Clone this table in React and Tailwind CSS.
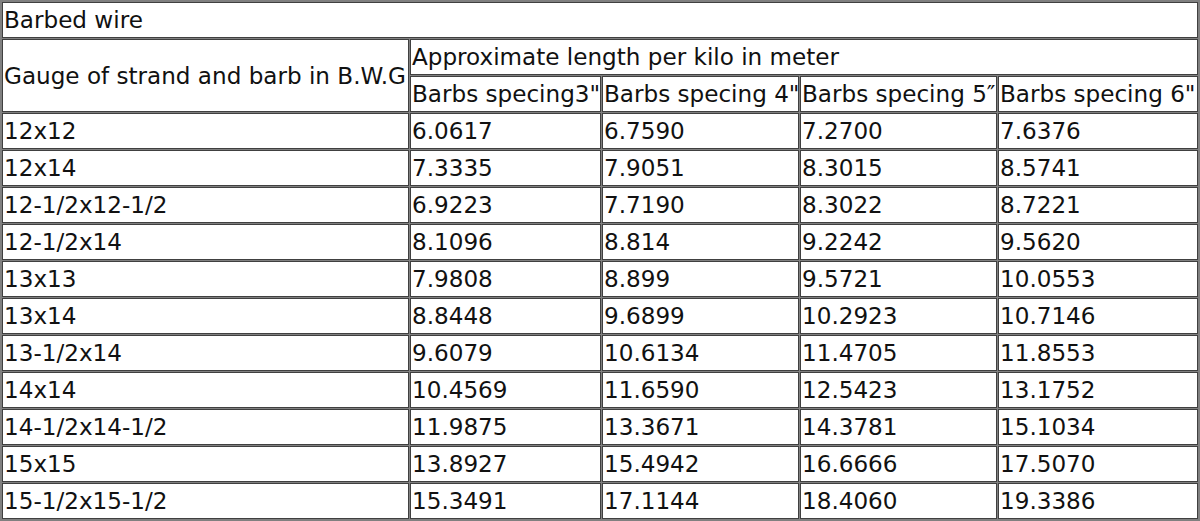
import React from 'react';

const ROWS = [
  ['12x12', '6.0617', '6.7590', '7.2700', '7.6376'],
  ['12x14', '7.3335', '7.9051', '8.3015', '8.5741'],
  ['12-1/2x12-1/2', '6.9223', '7.7190', '8.3022', '8.7221'],
  ['12-1/2x14', '8.1096', '8.814', '9.2242', '9.5620'],
  ['13x13', '7.9808', '8.899', '9.5721', '10.0553'],
  ['13x14', '8.8448', '9.6899', '10.2923', '10.7146'],
  ['13-1/2x14', '9.6079', '10.6134', '11.4705', '11.8553'],
  ['14x14', '10.4569', '11.6590', '12.5423', '13.1752'],
  ['14-1/2x14-1/2', '11.9875', '13.3671', '14.3781', '15.1034'],
  ['15x15', '13.8927', '15.4942', '16.6666', '17.5070'],
  ['15-1/2x15-1/2', '15.3491', '17.1144', '18.4060', '19.3386'],
];

const cell = 'border border-[#404040] bg-white px-px py-0 text-left align-middle whitespace-nowrap leading-[34px] font-normal';

export default function App() {
  return (
    <div className="bg-white" style={{ fontFamily: '"DejaVu Sans", Verdana, sans-serif' }}>
      <table className="w-[1200px] table-fixed border-separate border-spacing-px border border-[#808080] bg-[#808080] text-[23.1px] text-[#111]">
        <colgroup>
          <col className="w-[407px]" />
          <col className="w-[191px]" />
          <col className="w-[197px]" />
          <col className="w-[197px]" />
          <col className="w-[200px]" />
        </colgroup>
        <tbody>
          <tr>
            <td colSpan={5} className={cell}>Barbed wire</td>
          </tr>
          <tr>
            <td rowSpan={2} className={cell}>Gauge of strand and barb in B.W.G</td>
            <td colSpan={4} className={cell}>Approximate length per kilo in meter</td>
          </tr>
          <tr>
            <td className={cell}>Barbs specing3"</td>
            <td className={cell}>Barbs specing 4"</td>
            <td className={cell}>Barbs specing 5″</td>
            <td className={cell}>Barbs specing 6"</td>
          </tr>
          {ROWS.map((row) => (
            <tr key={row[0]}>
              {row.map((v, i) => (
                <td key={`${row[0]}-${i}`} className={cell}>{v}</td>
              ))}
            </tr>
          ))}
        </tbody>
      </table>
    </div>
  );
}
